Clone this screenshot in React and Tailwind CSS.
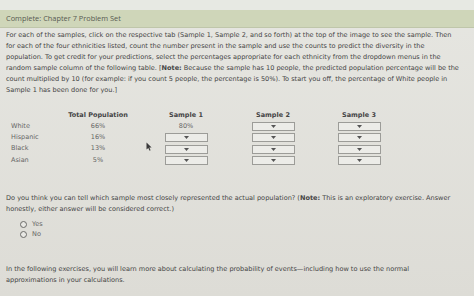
import React from 'react'

const font = { fontFamily: '"DejaVu Sans", Verdana, sans-serif' }

const rows = [
    { name: 'White', total: '66%', s1: '80%' },
    { name: 'Hispanic', total: '16%' },
    { name: 'Black', total: '13%' },
    { name: 'Asian', total: '5%' },
]

function Drop() {
    return (
        <div className="mx-auto w-[43px] h-[9px] border border-[#9c9c98] bg-[#ecece8] flex items-center justify-center">
            <svg width="5" height="3" viewBox="0 0 5 3"><path d="M0 0h5L2.5 3z" fill="#555" /></svg>
        </div>
    )
}

function Radio({ label }) {
    return (
        <div className="flex items-center gap-[5px] h-[10px]">
            <div className="w-[7px] h-[7px] rounded-full border-[1.5px] border-[#6b6b68] bg-[#e8e8e4]" />
            <span>{label}</span>
        </div>
    )
}

export default function App() {
    return (
        <div className="w-[474px] h-[296px] overflow-hidden bg-gradient-to-b from-[#e6e6e1] to-[#dddcd6] text-[#454545] relative" style={font}>
            <div className="h-[10px] bg-[#e7e9e3]" />
            <div className="h-[18px] bg-[#cfd6b9] border-b border-[#bfc6aa] flex items-center pl-[6px] text-[7.4px] text-[#575a52]" style={{ fontFamily: '"Open Sans", sans-serif' }}>
                Complete: Chapter 7 Problem Set
            </div>

            <div className="px-[6px] pt-[2px] text-[6.55px] leading-[11px] whitespace-nowrap">
                <p>For each of the samples, click on the respective tab (Sample 1, Sample 2, and so forth) at the top of the image to see the sample. Then</p>
                <p>for each of the four ethnicities listed, count the number present in the sample and use the counts to predict the diversity in the</p>
                <p>population. To get credit for your predictions, select the percentages appropriate for each ethnicity from the dropdown menus in the</p>
                <p>random sample column of the following table. [<b>Note:</b> Because the sample has 10 people, the predicted population percentage will be the</p>
                <p>count multiplied by 10 (for example: if you count 5 people, the percentage is 50%). To start you off, the percentage of White people in</p>
                <p>Sample 1 has been done for you.]</p>
            </div>

            {/* table */}
            <div className="mt-[15px] pl-[11px] text-[6.5px]">
                <div className="grid grid-cols-[43px_88px_88px_86px_86px] h-[10px] items-center font-bold text-[#454545]">
                    <div />
                    <div className="text-center">Total Population</div>
                    <div className="text-center">Sample 1</div>
                    <div className="text-center">Sample 2</div>
                    <div className="text-center">Sample 3</div>
                </div>
                {rows.map((r) => (
                    <div key={r.name} className="grid grid-cols-[43px_88px_88px_86px_86px] h-[11.3px] items-center text-[#666]">
                        <div>{r.name}</div>
                        <div className="text-center">{r.total}</div>
                        <div className="text-center">{r.s1 ? r.s1 : <Drop />}</div>
                        <div><Drop /></div>
                        <div><Drop /></div>
                    </div>
                ))}
            </div>

            <div className="mt-[27px] px-[6px] text-[6.55px] leading-[11px] whitespace-nowrap">
                <p>Do you think you can tell which sample most closely represented the actual population? (<b>Note:</b> This is an exploratory exercise. Answer</p>
                <p>honestly, either answer will be considered correct.)</p>
                <div className="pl-[14px] mt-[4px] text-[#666]">
                    <Radio label="Yes" />
                    <Radio label="No" />
                </div>
                <div className="mt-[25px]">
                    <p>In the following exercises, you will learn more about calculating the probability of events—including how to use the normal</p>
                    <p>approximations in your calculations.</p>
                </div>
            </div>

            {/* mouse cursor */}
            <svg className="absolute left-[146px] top-[142px]" width="6" height="9" viewBox="0 0 6 9">
                <path d="M0.5 0.5v7l1.8-1.6 1.3 2.8 1-.5-1.3-2.7h2.3z" fill="#3a3a3a" />
            </svg>
        </div>
    )
}
